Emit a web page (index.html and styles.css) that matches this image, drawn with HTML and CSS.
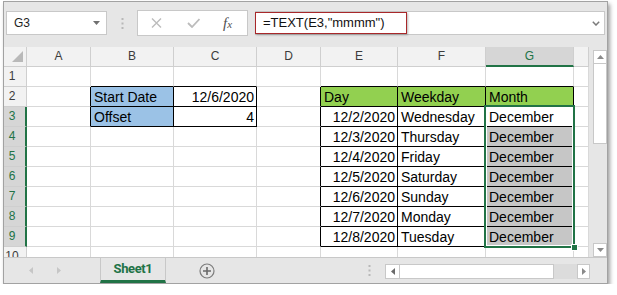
FILE: index.html
```html
<!DOCTYPE html>
<html>
<head>
<meta charset="utf-8">
<link rel="stylesheet" href="styles.css">
</head>
<body>
<div class="window">
  <div class="fbar">
    <div class="namebox"><span>G3</span><svg width="7" height="4" viewBox="0 0 7 4"><polygon points="0,0 7,0 3.5,4" fill="#707070"/></svg></div>
    <div class="sep"><svg width="3" height="11" viewBox="0 0 3 11"><rect x="0.5" y="0" width="2" height="2" fill="#b8b8b8"/><rect x="0.5" y="4.5" width="2" height="2" fill="#b8b8b8"/><rect x="0.5" y="9" width="2" height="2" fill="#b8b8b8"/></svg></div>
    <div class="fxbox">
      <svg class="ix" width="11" height="10" viewBox="0 0 11 10"><path d="M1 0.5 L10 9.5 M10 0.5 L1 9.5" stroke="#bcbcbc" stroke-width="1.4" fill="none"/></svg>
      <svg class="iv" width="13" height="10" viewBox="0 0 13 10"><path d="M1 5 L5 9 L12.5 1" stroke="#bcbcbc" stroke-width="1.8" fill="none"/></svg>
      <span class="fx"><i>f</i><span class="fxs">x</span></span>
    </div>
    <div class="finput">
      <div class="fhl">=TEXT(E3,"mmmm")</div>
      <svg class="chev" width="8" height="5" viewBox="0 0 8 5"><path d="M0.8 0.8 L4 4 L7.2 0.8" stroke="#7a7a7a" stroke-width="1.5" fill="none"/></svg>
    </div>
  </div>

  <div class="main">
    <div class="sheet">
      <div class="c h corner"><svg width="11" height="11" viewBox="0 0 11 11"><polygon points="11,0 11,11 0,11" fill="#b9b9b9"/></svg></div>
      <div class="c h">A</div><div class="c h">B</div><div class="c h">C</div><div class="c h">D</div><div class="c h">E</div><div class="c h">F</div><div class="c h hs colsel">G</div><div class="c h"></div>

      <div class="c h rh">1</div><div class="c"></div><div class="c bb"></div><div class="c bb"></div><div class="c"></div><div class="c bb"></div><div class="c bb"></div><div class="c bb"></div><div class="c"></div>

      <div class="c h rh">2</div><div class="c br"></div><div class="c br bb blue">Start Date</div><div class="c br bb r">12/6/2020</div><div class="c br"></div><div class="c br bb green">Day</div><div class="c br bb green">Weekday</div><div class="c br bb green">Month</div><div class="c"></div>

      <div class="c h rh hs rowsel">3</div><div class="c br"></div><div class="c br bb blue">Offset</div><div class="c br bb r">4</div><div class="c br"></div><div class="c br bb r">12/2/2020</div><div class="c br bb">Wednesday</div><div class="c br bb active">December<div class="sel"><i class="handle"></i></div></div><div class="c"></div>

      <div class="c h rh hs rowsel">4</div><div class="c"></div><div class="c"></div><div class="c"></div><div class="c br"></div><div class="c br bb r">12/3/2020</div><div class="c br bb">Thursday</div><div class="c br bb gray">December</div><div class="c"></div>

      <div class="c h rh hs rowsel">5</div><div class="c"></div><div class="c"></div><div class="c"></div><div class="c br"></div><div class="c br bb r">12/4/2020</div><div class="c br bb">Friday</div><div class="c br bb gray">December</div><div class="c"></div>

      <div class="c h rh hs rowsel">6</div><div class="c"></div><div class="c"></div><div class="c"></div><div class="c br"></div><div class="c br bb r">12/5/2020</div><div class="c br bb">Saturday</div><div class="c br bb gray">December</div><div class="c"></div>

      <div class="c h rh hs rowsel">7</div><div class="c"></div><div class="c"></div><div class="c"></div><div class="c br"></div><div class="c br bb r">12/6/2020</div><div class="c br bb">Sunday</div><div class="c br bb gray">December</div><div class="c"></div>

      <div class="c h rh hs rowsel">8</div><div class="c"></div><div class="c"></div><div class="c"></div><div class="c br"></div><div class="c br bb r">12/7/2020</div><div class="c br bb">Monday</div><div class="c br bb gray">December</div><div class="c"></div>

      <div class="c h rh hs rowsel">9</div><div class="c"></div><div class="c"></div><div class="c"></div><div class="c br"></div><div class="c br bb r">12/8/2020</div><div class="c br bb">Tuesday</div><div class="c br bb gray">December</div><div class="c"></div>

      <div class="c h rh">10</div><div class="c"></div><div class="c"></div><div class="c"></div><div class="c"></div><div class="c"></div><div class="c"></div><div class="c"></div><div class="c"></div>
    </div>
    <div class="vscroll">
      <div class="sbtn"><svg width="7" height="4" viewBox="0 0 7 4"><polygon points="0,4 7,4 3.5,0" fill="#8a8a8a"/></svg></div>
      <div class="vthumb"></div>
      <div class="vtrack"></div>
      <div class="sbtn"><svg width="7" height="4" viewBox="0 0 7 4"><polygon points="0,0 7,0 3.5,4" fill="#8a8a8a"/></svg></div>
    </div>
  </div>

  <div class="tabbar">
    <div class="nav">
      <svg width="4" height="7" viewBox="0 0 4 7"><polygon points="4,0 4,7 0,3.5" fill="#c6c6c6"/></svg>
      <svg width="4" height="7" viewBox="0 0 4 7"><polygon points="0,0 0,7 4,3.5" fill="#c6c6c6"/></svg>
    </div>
    <div class="tab">Sheet1</div>
    <div class="plus"><svg width="16" height="16" viewBox="0 0 16 16"><circle cx="8" cy="8" r="7" stroke="#7c7c7c" stroke-width="1.2" fill="none"/><path d="M8 4 V12 M4 8 H12" stroke="#6a6a6a" stroke-width="1.6"/></svg></div>
    <div class="tdots"><svg width="3" height="11" viewBox="0 0 3 11"><rect x="0.5" y="0" width="2" height="2" fill="#b8b8b8"/><rect x="0.5" y="4.5" width="2" height="2" fill="#b8b8b8"/><rect x="0.5" y="9" width="2" height="2" fill="#b8b8b8"/></svg></div>
    <div class="hscroll">
      <div class="hbtn"><svg width="4" height="7" viewBox="0 0 4 7"><polygon points="4,0 4,7 0,3.5" fill="#6a6a6a"/></svg></div>
      <div class="hthumb"></div>
      <div class="htrack"></div>
      <div class="hbtn rb"><svg width="4" height="7" viewBox="0 0 4 7"><polygon points="0,0 0,7 4,3.5" fill="#8a8a8a"/></svg></div>
    </div>
  </div>
</div>
</body>
</html>
```

FILE: styles.css
```css
* { box-sizing: border-box; }
html, body { margin: 0; padding: 0; background: #fff; }
body { font-family: "Liberation Sans", Arial, sans-serif; }

.window {
  margin: 1px 0 0 3px;
  width: 605px;
  height: 283px;
  border: 1px solid #a2a2a2;
  background: #e6e6e6;
  box-shadow: 2px 3px 4px rgba(0, 0, 0, 0.38);
  display: flex;
  flex-direction: column;
  overflow: hidden;
}

/* formula bar */
.fbar {
  flex: none;
  height: 45px;
  display: flex;
  align-items: flex-start;
  padding: 9px 0 0 2px;
}
.namebox {
  width: 101px;
  height: 24px;
  background: #fff;
  border: 1px solid #c8c8c8;
  display: flex;
  align-items: center;
  justify-content: space-between;
  padding: 0 6px 0 7px;
  font-size: 12px;
  color: #1e1e1e;
}
.sep {
  width: 30px;
  height: 24px;
  display: flex;
  align-items: center;
  justify-content: center;
}
.fxbox {
  width: 111px;
  height: 26px;
  margin-top: -1px;
  background: #fff;
  border: 1px solid #c8c8c8;
  display: flex;
  align-items: center;
  padding-left: 13px;
}
.iv { margin-left: 25px; }
.fx {
  margin-left: 23px;
  font-family: "Liberation Serif", serif;
  font-size: 15px;
  color: #505050;
  line-height: 1;
}
.fx i { font-style: italic; }
.fxs { font-style: italic; font-size: 11px; }
.finput {
  width: 350px;
  height: 24px;
  margin-left: 7px;
  background: #fff;
  border: 1px solid #c8c8c8;
  display: flex;
  align-items: stretch;
}
.fhl {
  width: 152px;
  margin-left: -1px;
  border: 1px solid #a8282a;
  box-shadow: 1px 1px 2px rgba(0, 0, 0, 0.28);
  padding-left: 7px;
  font-size: 13px;
  line-height: 20px;
  color: #111;
  white-space: nowrap;
}
.chev { margin: 0 4px 0 auto; align-self: center; }

/* sheet */
.main {
  flex: none;
  height: 210px;
  display: flex;
}
.sheet {
  width: 585px;
  height: 210px;
  overflow: hidden;
  background: #fff;
  display: grid;
  grid-template-columns: 23px 64px 83px 83px 64px 77px 88px 88px 15px;
  grid-auto-rows: 20px;
  align-content: start;
}
.c {
  border-right: 1px solid #d9d9d9;
  border-bottom: 1px solid #d9d9d9;
  font-size: 14px;
  line-height: 20px;
  padding: 0 2px 0 3px;
  white-space: nowrap;
  color: #000;
}
.c.r { text-align: right; padding-right: 2px; }
.c.br { border-right-color: #000; }
.c.bb { border-bottom-color: #000; }
.blue { background: #9bc2e6; }
.green { background: #92d050; }
.gray { background: #c6c6c6; }

.h {
  background: #f2f2f2;
  border-right-color: #cfcfcf;
  border-bottom-color: #cfcfcf;
  font-size: 12px;
  line-height: 19px;
  text-align: center;
  color: #3c3c3c;
  padding: 0;
}
.rh { padding-right: 6px; }
.corner { display: flex; align-items: flex-end; justify-content: flex-end; padding: 0 3px 4px 0; }
.hs { background: #d6d6d6; color: #217346; }
.colsel { border-bottom: 2px solid #217346; }
.rowsel { border-right: 2px solid #217346; padding-right: 5px; }

.active { position: relative; }
.sel {
  position: absolute;
  left: -2px;
  top: -2px;
  width: 91px;
  height: 143px;
  border: 2px solid #217346;
  box-shadow: inset 0 0 0 1px #fff;
  z-index: 3;
}
.handle {
  position: absolute;
  right: -5px;
  bottom: -5px;
  width: 7px;
  height: 7px;
  background: #217346;
  border: 1px solid #fff;
}

.vscroll {
  width: 18px;
  height: 210px;
  display: flex;
  flex-direction: column;
  padding: 3px 0 0 4px;
  background: #e6e6e6;
}
.sbtn {
  height: 14px;
  background: #fff;
  border: 1px solid #c8c8c8;
  display: flex;
  align-items: center;
  justify-content: center;
  flex: none;
}
.vthumb {
  height: 80px;
  background: #fff;
  border: 1px solid #c8c8c8;
  border-top: none;
  flex: none;
}
.vtrack { flex: 1; }

/* tab bar */
.tabbar {
  flex: none;
  height: 26px;
  display: flex;
  border-top: 1px solid #c8c8c8;
}
.nav {
  width: 96px;
  display: flex;
  align-items: center;
  padding-left: 25px;
  gap: 24px;
}
.tab {
  width: 66px;
  border-left: 1px solid #c8c8c8;
  border-right: 1px solid #c8c8c8;
  border-bottom: 3px solid #217346;
  text-align: center;
  font-family: Roboto, "Liberation Sans", sans-serif;
  font-weight: 700;
  font-size: 13px;
  letter-spacing: -0.4px;
  line-height: 22px;
  color: #217346;
}
.plus {
  width: 82px;
  display: flex;
  align-items: center;
  padding-left: 33px;
}
.tdots {
  margin-left: auto;
  width: 30px;
  display: flex;
  align-items: center;
  padding-left: 13px;
}
.hscroll {
  width: 205px;
  height: 15px;
  margin: 6px 17px 0 0;
  display: flex;
}
.hbtn {
  width: 15px;
  background: #fff;
  border: 1px solid #c8c8c8;
  display: flex;
  align-items: center;
  justify-content: center;
}
.hbtn.rb { width: 13px; }
.hthumb {
  width: 154px;
  background: #fff;
  border: 1px solid #c8c8c8;
  border-left: none;
}
.htrack { flex: 1; background: #dcdcdc; }
```
